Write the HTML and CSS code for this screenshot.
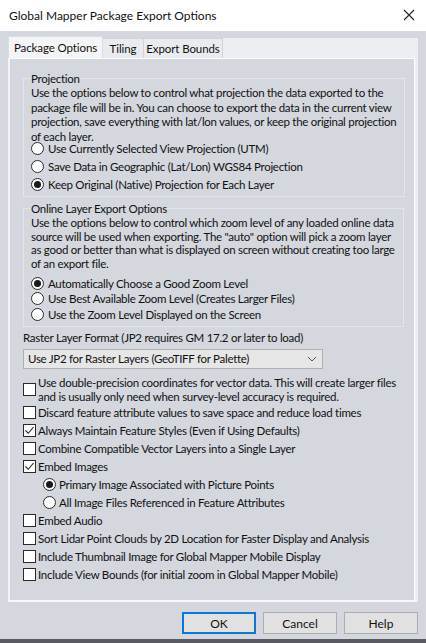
FILE: index.html
```html
<!DOCTYPE html>
<html>
<head>
<meta charset="utf-8">
<link rel="stylesheet" href="styles.css">
</head>
<body>
<div class="window">
  <div class="titlebar">
    <span class="title">Global Mapper Package Export Options</span>
    <svg class="close" width="12" height="12" viewBox="0 0 12 12"><path d="M1 1 L11 11 M11 1 L1 11" stroke="#222" stroke-width="1.1" fill="none"/></svg>
  </div>
  <div class="tabctl">
    <div class="tabrow">
      <div class="tab active">Package Options</div>
      <div class="tab tiling">Tiling</div>
      <div class="tab bounds">Export Bounds</div>
    </div>
    <div class="panel">
      <fieldset class="group g1">
        <legend>Projection</legend>
        <div class="desc d1">Use the options below to control what projection the data exported to the<br>package file will be in. You can choose to export the data in the current view<br>projection, save everything with lat/lon values, or keep the original projection<br>of each layer.</div>
        <div class="radios r1">
          <div class="opt"><span class="radio"></span>Use Currently Selected View Projection (UTM)</div>
          <div class="opt"><span class="radio"></span>Save Data in Geographic (Lat/Lon) WGS84 Projection</div>
          <div class="opt"><span class="radio on"></span>Keep Original (Native) Projection for Each Layer</div>
        </div>
      </fieldset>
      <fieldset class="group g2">
        <legend>Online Layer Export Options</legend>
        <div class="desc d2">Use the options below to control which zoom level of any loaded online data<br>source will be used when exporting. The "auto" option will pick a zoom layer<br>as good or better than what is displayed on screen without creating too large<br>of an export file.</div>
        <div class="radios r2">
          <div class="opt"><span class="radio on"></span>Automatically Choose a Good Zoom Level</div>
          <div class="opt"><span class="radio"></span>Use Best Available Zoom Level (Creates Larger Files)</div>
          <div class="opt"><span class="radio"></span>Use the Zoom Level Displayed on the Screen</div>
        </div>
      </fieldset>
      <div class="raster-label">Raster Layer Format (JP2 requires GM 17.2 or later to load)</div>
      <div class="select">
        <span>Use JP2 for Raster Layers (GeoTIFF for Palette)</span>
        <svg class="chev" width="10" height="6" viewBox="0 0 10 6"><path d="M1 1 L5 5 L9 1" stroke="#555" stroke-width="1" fill="none"/></svg>
      </div>
      <div class="check two"><span class="box"></span><span class="lbl">Use double-precision coordinates for vector data. This will create larger files<br>and is usually only need when survey-level accuracy is required.</span></div>
      <div class="check"><span class="box"></span>Discard feature attribute values to save space and reduce load times</div>
      <div class="check"><span class="box"><svg width="11" height="11" viewBox="0 0 11 11"><path d="M1.5 5.5 L4.3 8.3 L9.5 2" stroke="#222" stroke-width="1.1" fill="none"/></svg></span>Always Maintain Feature Styles (Even if Using Defaults)</div>
      <div class="check"><span class="box"></span>Combine Compatible Vector Layers into a Single Layer</div>
      <div class="check"><span class="box"><svg width="11" height="11" viewBox="0 0 11 11"><path d="M1.5 5.5 L4.3 8.3 L9.5 2" stroke="#222" stroke-width="1.1" fill="none"/></svg></span>Embed Images</div>
      <div class="check sub"><span class="radio on"></span>Primary Image Associated with Picture Points</div>
      <div class="check sub"><span class="radio"></span>All Image Files Referenced in Feature Attributes</div>
      <div class="check"><span class="box"></span>Embed Audio</div>
      <div class="check"><span class="box"></span>Sort Lidar Point Clouds by 2D Location for Faster Display and Analysis</div>
      <div class="check"><span class="box"></span>Include Thumbnail Image for Global Mapper Mobile Display</div>
      <div class="check"><span class="box"></span>Include View Bounds (for initial zoom in Global Mapper Mobile)</div>
    </div>
  </div>
  <div class="buttons">
    <div class="btn default">OK</div>
    <div class="btn">Cancel</div>
    <div class="btn">Help</div>
  </div>
  <div class="bottomstrip"></div>
</div>
</body>
</html>
```
FILE: styles.css
```css
* { box-sizing: border-box; }
html, body { margin: 0; padding: 0; }
body {
  width: 426px;
  height: 643px;
  overflow: hidden;
  background: #d4d7de;
  font-family: Lato, "Liberation Sans", sans-serif;
  font-size: 11.5px;
  letter-spacing: -0.28px;
  white-space: nowrap;
  color: #111;
}
.window {
  height: 643px;
  display: flex;
  flex-direction: column;
}
.titlebar {
  height: 31px;
  flex: none;
  background: #fff;
  display: flex;
  align-items: center;
  justify-content: space-between;
  padding: 0 11px 1px 9px;
}
.title { font-size: 12px; letter-spacing: 0px; color: #111; }
.close { display: block; }
.tabctl {
  margin: 5px 8px 0 8px;
  flex: none;
}
.tabrow {
  height: 22px;
  display: flex;
  align-items: flex-end;
  background: linear-gradient(to bottom, transparent 2px, #eceef1 2px);
}
.tab {
  height: 20px;
  padding-top: 3px;
  text-align: center;
  border: 1px solid #d0d3d8;
  border-bottom: none;
  background: #e9ebee;
  line-height: 14px;
  letter-spacing: -0.1px;
}
.tab.active {
  height: 22px;
  width: 95px;
  background: #f4f5f7;
  border-color: #dadde1;
  padding-top: 4px;
}
.tab.tiling { width: 41px; border-left: none; }
.tab.bounds { width: 79px; border-left: none; }
.panel {
  height: 544px;
  overflow: hidden;
  background: #d4d7de;
  border-top: 1px solid #fbfbfc;
  border-left: 2px solid #f2f3f5;
  border-bottom: 2px solid #f7f8f9;
  border-right: 1px solid #ffffff;
  box-shadow: 3px 0 0 #eceef1;
  padding: 0 11px 0 13px;
  margin-right: 3px;
}
.group {
  margin: 0;
  border: 1px solid #e3e5ea;
  padding: 0 8px 0 7px;
}
.group legend {
  padding: 0;
  line-height: 15px;
}
.g1 { margin-top: 12px; padding-bottom: 5px; }
.g2 { margin-top: 4px; padding-bottom: 5px; }
.d1 { line-height: 14.5px; }
.d2 { line-height: 13.5px; }
.radios { display: flex; flex-direction: column; }
.r1 { gap: 5px; margin-top: -2px; }
.r2 { gap: 2.5px; margin-top: 6.8px; }
.opt {
  height: 13px;
  line-height: 13px;
  display: flex;
  align-items: center;
}
.radio {
  width: 13px;
  height: 13px;
  border: 1px solid #2a2a2a;
  border-radius: 50%;
  background: #fff;
  margin-right: 4px;
  flex: none;
  display: flex;
  align-items: center;
  justify-content: center;
}
.radio.on::after {
  content: "";
  width: 7px;
  height: 7px;
  border-radius: 50%;
  background: #1a1a1a;
}
.raster-label {
  margin-top: 4px;
  line-height: 14px;
}
.select {
  margin-top: 4px;
  width: 300px;
  height: 20px;
  background: #e6e6e6;
  border: 1px solid #b0b0b0;
  display: flex;
  align-items: center;
  justify-content: space-between;
  padding: 0 5px 0 4px;
}
.chev { display: block; }
.check {
  height: 18px;
  display: flex;
  align-items: center;
}
.check.two {
  height: auto;
  margin-top: 7.6px;
  line-height: 13.4px;
}
.box {
  width: 13px;
  height: 13px;
  border: 1px solid #2a2a2a;
  background: #fff;
  margin-right: 2px;
  flex: none;
  display: flex;
  align-items: center;
  justify-content: center;
}
.box svg { display: block; }
.check.sub { padding-left: 20px; }
.check.sub .radio { margin-right: 3px; }
.buttons {
  margin-top: 10px;
  padding-right: 8px;
  display: flex;
  justify-content: flex-end;
  gap: 7px;
  flex: none;
}
.btn {
  width: 74px;
  height: 22px;
  background: #e1e1e1;
  border: 1px solid #adadad;
  display: flex;
  align-items: center;
  justify-content: center;
  font-size: 12px;
  letter-spacing: 0;
}
.btn.default {
  border: 2px solid #0a78d4;
}
.bottomstrip {
  margin-top: auto;
  height: 4px;
  flex: none;
  background: #585c62;
}
```
